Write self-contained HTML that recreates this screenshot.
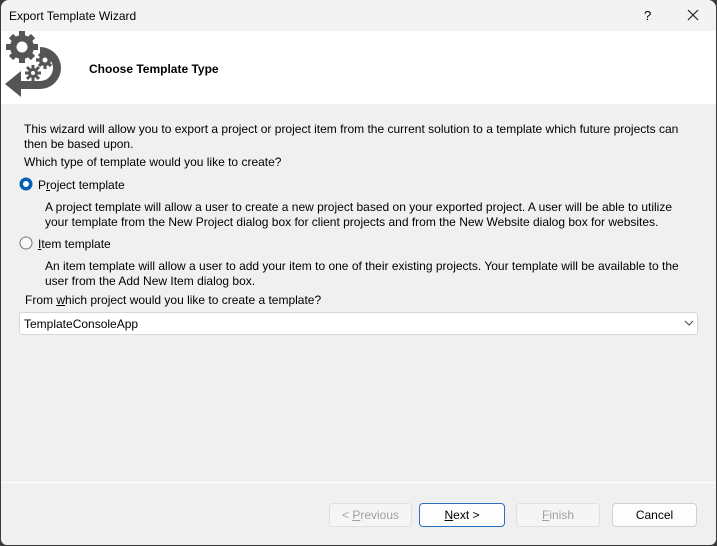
<!DOCTYPE html>
<html><head><meta charset="utf-8"><style>
*{margin:0;padding:0;box-sizing:border-box}
body{width:717px;height:546px;background:#3a3a3a;font-family:"Liberation Sans",sans-serif;font-size:12px;color:#000;position:relative;overflow:hidden}
.win{position:absolute;left:1px;top:0;width:715px;height:545px;background:#f0f0f0;border-radius:8px 8px 6px 6px;overflow:hidden}
.tb{position:absolute;left:0;top:0;width:100%;height:31px;background:#f3f3f3}
.hd{position:absolute;left:0;top:31px;width:100%;height:73px;background:#fff}
.a{position:absolute;white-space:nowrap}
.btn{position:absolute;top:503px;height:24px;border:1px solid #d0d0d0;background:#fdfdfd;border-radius:4px;text-align:center;line-height:22px}
.dis{color:#a0a0a0;background:#f5f5f5;border-color:#e0e0e0}
u{text-decoration:underline}
</style></head><body><div class="win">
<div class="tb"></div>
<div class="a" style="left:8px;top:9px;">Export Template Wizard</div>
<div class="a" style="left:643px;top:8px;font-size:13px">?</div>
<svg class="a" style="left:686px;top:9px" width="12" height="12"><path d="M1 1L11 11M11 1L1 11" stroke="#222" stroke-width="1.2"/></svg>
<div class="hd"></div>
<svg class="a" style="left:-1px;top:0" width="75" height="100" viewBox="0 0 75 100">
<g fill="#555">
<path d="M40 47 A21 21 0 0 1 40 89 L20 89 L20 81 L40 81 A13 13 0 0 0 40 55Z"/>
<path d="M5 84 L21 71 L21 97 Z"/>
<circle cx="22" cy="47" r="12"/>
<g stroke="#555" stroke-width="6"><path d="M22 31V63M6 47H38M11 36L33 58M33 36L11 58"/></g>
<circle cx="45" cy="60" r="6"/><g stroke="#555" stroke-width="3.2"><path d="M45 51V69M36 60H54M39 54L51 66M51 54L39 66"/></g>
<circle cx="33" cy="73" r="5"/><g stroke="#555" stroke-width="3"><path d="M33 65V81M25 73H41M27 67L39 79M39 67L27 79"/></g>
</g>
<circle cx="22" cy="47" r="5.5" fill="#fff"/><circle cx="45" cy="60" r="2.5" fill="#fff"/><circle cx="33" cy="73" r="2" fill="#fff"/>
</svg>
<div class="a" style="left:88px;top:62px;font-weight:bold">Choose Template Type</div>
<div class="a" style="left:23px;top:122px;line-height:15px">This wizard will allow you to export a project or project item from the current solution to a template which future projects can<br>then be based upon.</div>
<div class="a" style="left:23px;top:155px">Which type of template would you like to create?</div>
<svg class="a" style="left:18px;top:177px" width="14" height="14"><circle cx="7" cy="7" r="6.5" fill="#005fb8"/><circle cx="7" cy="7" r="3" fill="#fff"/></svg>
<div class="a" style="left:37px;top:178px">P<u>r</u>oject template</div>
<div class="a" style="left:44px;top:200px;line-height:15px">A project template will allow a user to create a new project based on your exported project. A user will be able to utilize<br>your template from the New Project dialog box for client projects and from the New Website dialog box for websites.</div>
<svg class="a" style="left:18px;top:236px" width="14" height="14"><circle cx="7" cy="7" r="6" fill="#fafafa" stroke="#777"/></svg>
<div class="a" style="left:37px;top:237px"><u>I</u>tem template</div>
<div class="a" style="left:44px;top:259px;line-height:15px">An item template will allow a user to add your item to one of their existing projects. Your template will be available to the<br>user from the Add New Item dialog box.</div>
<div class="a" style="left:24px;top:293px">From <u>w</u>hich project would you like to create a template?</div>
<div class="a" style="left:18px;top:312px;width:679px;height:23px;background:#fff;border:1px solid #d8d8d8;border-radius:3px;padding:4px 0 0 4px">TemplateConsoleApp</div>
<svg class="a" style="left:683px;top:320px" width="10" height="6"><path d="M1 1L5 5L9 1" stroke="#444" fill="none"/></svg>
<div class="a" style="left:0;top:482px;width:100%;height:1px;background:#fff"></div>
<div class="btn dis" style="left:328px;width:83px">&lt; <u>P</u>revious</div>
<div class="btn" style="left:418px;width:86px;border-color:#2a6ebf"><u>N</u>ext &gt;</div>
<div class="btn dis" style="left:515px;width:84px"><u>F</u>inish</div>
<div class="btn" style="left:611px;width:85px">Cancel</div>
</div></body></html>
